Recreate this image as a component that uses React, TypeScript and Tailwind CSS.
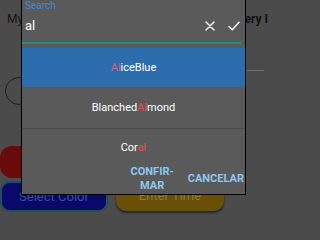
const ROWS = [
  { pre: '', hit: 'Al', post: 'iceBlue', selected: true },
  { pre: 'Blanched', hit: 'Al', post: 'mond', selected: false },
  { pre: 'Cor', hit: 'al', post: '', selected: false },
];

function ClearIcon() {
  return (
    <svg width="10" height="10" viewBox="0 0 10 10" fill="none">
      <path d="M1 1 L9 9 M9 1 L1 9" stroke="#f2f2f2" strokeWidth="1.5" strokeLinecap="round" />
    </svg>
  );
}

function CheckIcon() {
  return (
    <svg width="12" height="10" viewBox="0 0 12 10" fill="none">
      <path d="M1 5.5 L4.3 8.8 L11 1.3" stroke="#f2f2f2" strokeWidth="1.5" strokeLinecap="round" strokeLinejoin="round" />
    </svg>
  );
}

function Backdrop() {
  return (
    <div className="flex flex-col">
      {/* página por trás do diálogo, escurecida */}
      <div className="flex h-[30px] pt-[11px] leading-[16px]">
        <span className="w-[246px] pl-[7px] text-[12px] text-[#141414]">My</span>
        <span className="whitespace-nowrap text-[12px] font-bold text-[#111]">ery I</span>
      </div>
      <div className="mt-[40px] flex h-px">
        <div className="ml-[247px] h-px w-[17px] bg-[#707070]" />
      </div>
      <div className="mt-[6px] ml-[5px] h-[28px] w-[28px] rounded-full border-[1.5px] border-[#202020]" />
      <div className="mt-[41px] h-[32px] w-[108px] rounded-[12px] bg-[#6a0b0b]" />
      <div className="mt-[3px] flex gap-[8px]">
        <div className="flex h-[31px] w-[108px] items-center justify-center rounded-[10px] border-2 border-[#1f4c62] bg-[#09096a] text-[13px] text-[#3d4e98]">
          Select Color
        </div>
        <div className="flex h-[30px] w-[108px] items-center justify-center rounded-[10px] bg-[#6a4f07] text-[13px] text-[#8e7a42] shadow-[0_2px_2px_#262626]">
          Enter Time
        </div>
      </div>
    </div>
  );
}

export default function App() {
  return (
    <div className="min-h-screen bg-[#4b4b4b]">
      <div className="relative h-[215px] w-[268px] overflow-hidden bg-[#4b4b4b] font-['Roboto',sans-serif]">
        <Backdrop />

        <div className="absolute left-[21px] top-[-1px] flex h-[196px] w-[225px] flex-col border border-black bg-[#5a5a5a]">
          {/* busca */}
          <div className="pl-[3px] pr-[5px]">
            <div className="text-[10px] leading-[12px] text-[#3b8ad2]">Search</div>
            <div className="flex h-[28px] items-center">
              <span className="flex-1 text-[13px] leading-[16px] text-white">al</span>
              <ClearIcon />
              <div className="w-[13px]" />
              <CheckIcon />
            </div>
          </div>
          <div className="mt-[2px] mr-[4px] h-[2px] bg-[#2d8a76]" />

          <div className="mt-[4px] h-[112px] overflow-hidden">
            {ROWS.map((r, i) => (
              <div key={i}>
                <div
                  className={
                    r.selected
                      ? 'flex h-[39px] items-center justify-center bg-[#2b6dad] pt-[2px] text-[11px] text-white'
                      : 'flex h-[39px] items-center justify-center text-[11px] text-white'
                  }
                >
                  <span>
                    {r.pre}
                    <span className={r.selected ? 'text-[#c7687f]' : 'text-[#e4504c]'}>{r.hit}</span>
                    {r.post}
                  </span>
                </div>
                {i === 0 && <div className="h-[2px] bg-[#5d5755]" />}
                {i === 1 && <div className="h-px bg-[#4a4a4a]" />}
              </div>
            ))}
          </div>

          <div className="flex h-[34px] items-center justify-end gap-[14px] pt-[4px] pr-[1px] text-[11px] font-bold text-[#8cc9ef]">
            <div className="text-center leading-[14px]">
              CONFIR-
              <br />
              MAR
            </div>
            <div className="leading-[14px]">CANCELAR</div>
          </div>
        </div>
      </div>
    </div>
  );
}
